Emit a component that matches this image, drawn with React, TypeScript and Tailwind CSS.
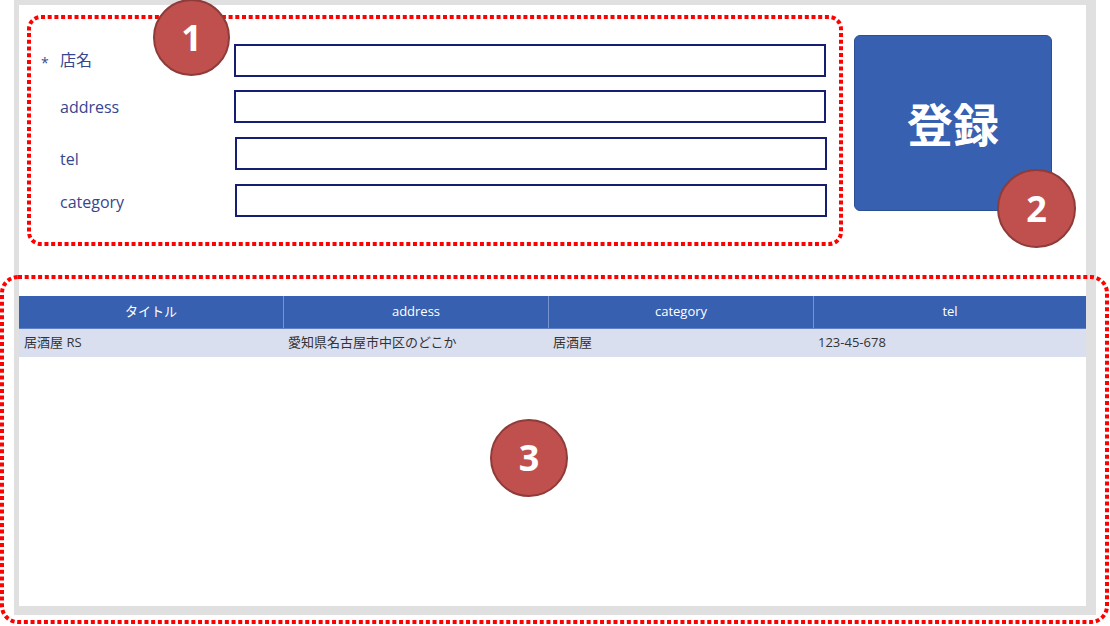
import React from 'react'

const fields = [
  { label: '店名', required: true, rowH: 'h-[46px]', labelOffset: 'mt-[5px]', inputShift: '' },
  { label: 'address', required: false, rowH: 'h-[47px]', labelOffset: 'mt-[6px]', inputShift: '' },
  { label: 'tel', required: false, rowH: 'h-[47px]', labelOffset: 'mt-[11px]', inputShift: 'ml-px' },
  { label: 'category', required: false, rowH: 'h-[33px]', labelOffset: 'mt-[7px]', inputShift: 'ml-px' },
]

const columns = ['タイトル', 'address', 'category', 'tel']
const rows = [['居酒屋 RS', '愛知県名古屋市中区のどこか', '居酒屋', '123-45-678']]

function Badge({ n, className }: { n: number; className: string }) {
  return (
    <div
      className={`absolute rounded-full bg-[#c0504d] border-2 border-[#8e3b39] flex items-center justify-center text-white font-bold text-[36px] leading-none ${className}`}
    >
      {n}
    </div>
  )
}

export default function App() {
  return (
    <div className="relative w-[1110px] h-[626px] bg-white overflow-hidden font-['Open_Sans','Noto_Sans_CJK_JP',sans-serif]">
      {/* canvas frame */}
      <div className="ml-[14px] w-[1082px] h-[615px] bg-[#e0e0e0] pl-[5px] pt-[5px] pr-[10px] pb-[9px]">
        <div className="w-full h-full bg-white flex flex-col">
          {/* form + button */}
          <div className="flex items-start pt-[30px]">
            <div className="flex flex-col mt-[9px] pl-[22px]">
              {fields.map(f => (
                <div key={f.label} className={`flex items-start ${f.rowH}`}>
                  <div className={`w-[19px] text-[14px] text-[#3a4a94] ${f.labelOffset} pt-[3px]`}>
                    {f.required ? '*' : ''}
                  </div>
                  <div className={`w-[174px] text-[16px] text-[#36468f] leading-[22px] ${f.labelOffset}`}>
                    {f.label}
                  </div>
                  <input
                    type="text"
                    className={`w-[592px] h-[33px] border-2 border-[#161e72] bg-white outline-none ${f.inputShift}`}
                  />
                </div>
              ))}
            </div>
            <button
              type="button"
              className="ml-[27px] w-[198px] h-[176px] rounded-[6px] bg-[#3760b0] border border-[#2c4f96] text-white text-[46px] font-bold font-['Noto_Sans_CJK_JP',sans-serif] leading-none pb-[2px]"
            >
              登録
            </button>
          </div>

          {/* gallery table */}
          <div className="mt-[79px] w-full">
            <div className="grid grid-cols-[264px_265px_265px_273px] h-[33px] bg-[#3760b0] border-b border-[#5f80c4]">
              {columns.map((c, i) => (
                <div
                  key={c}
                  className={`flex items-center justify-center text-white text-[13px] ${i > 0 ? 'border-l border-[#7893cf]' : ''}`}
                >
                  {c}
                </div>
              ))}
            </div>
            {rows.map((r, ri) => (
              <div key={ri} className="grid grid-cols-[264px_265px_265px_273px] h-[28px] bg-[#dadff0]">
                {r.map((v, i) => (
                  <div key={i} className="flex items-center pl-[5px] text-[13px] text-[#333333]">
                    {v}
                  </div>
                ))}
              </div>
            ))}
          </div>
        </div>
      </div>

      {/* annotation overlay */}
      <svg className="absolute inset-0 pointer-events-none" width="1110" height="626">
        <rect x="29" y="17" width="812" height="227" rx="12" fill="none" stroke="#ff0000" strokeWidth="4" strokeDasharray="4 2.7" />
        <rect x="2" y="277" width="1105" height="345" rx="16" fill="none" stroke="#ff0000" strokeWidth="4" strokeDasharray="4 2.7" />
      </svg>
      <Badge n={1} className="left-[153px] top-[-1px] w-[77px] h-[77px]" />
      <Badge n={2} className="left-[997px] top-[169px] w-[79px] h-[79px]" />
      <Badge n={3} className="left-[490px] top-[419px] w-[78px] h-[78px]" />
    </div>
  )
}
